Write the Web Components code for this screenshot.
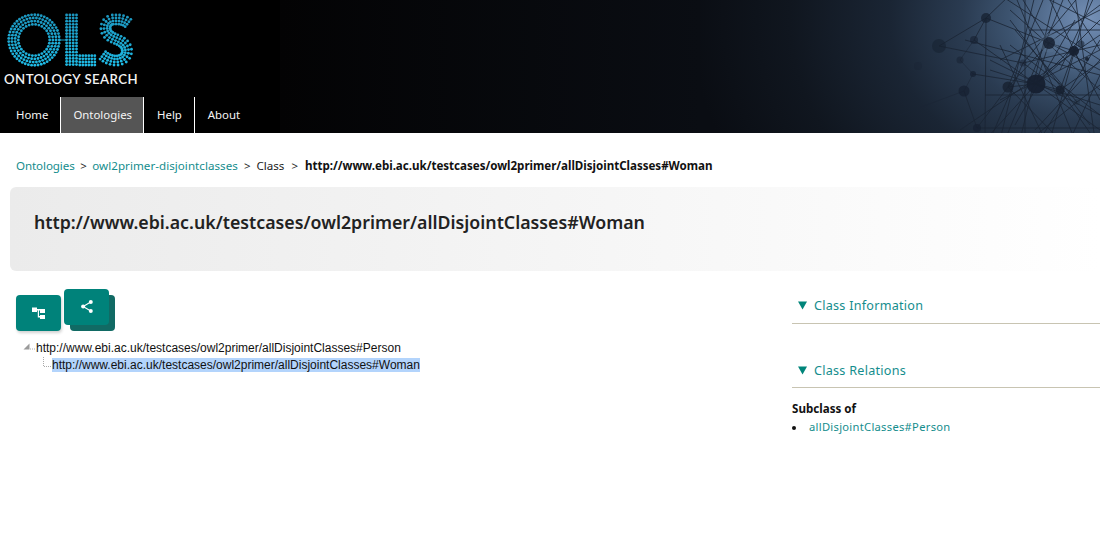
<!DOCTYPE html>
<html lang="en"><head><meta charset="utf-8"><title>OLS</title>
<style>
html,body{margin:0;padding:0;background:#fff}
body{font-family:"Noto Sans",sans-serif;color:#222;width:1100px;height:535px;overflow:hidden}
</style></head><body>
<ols-page>
  <ols-header>
    <ols-logo></ols-logo>
    <ols-nav-item slot="nav" first>Home</ols-nav-item>
    <ols-nav-item slot="nav" active>Ontologies</ols-nav-item>
    <ols-nav-item slot="nav">Help</ols-nav-item>
    <ols-nav-item slot="nav">About</ols-nav-item>
  </ols-header>
  <ols-breadcrumb></ols-breadcrumb>
  <ols-title>http://www.ebi.ac.uk/testcases/owl2primer/allDisjointClasses#Woman</ols-title>
  <ols-main>
    <ols-toolbar slot="left"></ols-toolbar>
    <ols-tree slot="left"></ols-tree>
    <ols-section slot="right" label="Class Information"></ols-section>
    <ols-section slot="right" label="Class Relations" gap>
      <ols-relations></ols-relations>
    </ols-section>
  </ols-main>
</ols-page>
<script>
function def(name, html, init){
  customElements.define(name, class extends HTMLElement{
    constructor(){super();this.attachShadow({mode:'open'}).innerHTML=typeof html==='function'?html(this):html;}
    connectedCallback(){ if(init) init(this,this.shadowRoot); }
  });
}
const FONT='"Noto Sans",sans-serif';
def('ols-page',`<style>:host{display:block}</style><slot></slot>`);

/* network backdrop */
const nodes=[[986,18,5,.75],[939,46,7,.55],[974,40,4,.6],[960,60,3.5,.5],[973,74,3,.7],[964,91,5.5,.7],[977,128,4,.7],[1008,87,5.5,.8],[1036,84,9.5,.95],[1060,90,4.500,.9],[1049,43,6,.85],[1074,51,5,.95],[1081,44,3.5,.55],[1087,59,2,.9],[1023,63,3.5,.45],[1077,102,3,.3],[918,66,4,.25]];
const links=[[986,18,939,46],[986,18,1049,43],[986,18,974,40],[986,18,1010,-5],[974,40,1036,84],[974,40,960,60],[960,60,973,74],[973,74,964,91],[964,91,900,115],[964,91,977,128],[973,74,1036,84],[1008,87,1036,84],[1036,84,1060,90],[1036,84,1049,43],[1036,84,1074,51],[1036,84,1100,20],[1036,84,1100,130],[1036,84,985,140],[1049,43,1074,51],[1049,43,1100,70],[1049,43,1100,5],[1049,43,1020,-5],[1049,43,1008,87],[1074,51,1060,90],[1074,51,1100,100],[1060,90,1100,62],[1060,90,1095,140],[1060,90,1023,63],[1023,63,1080,-5],[1023,63,1100,45],[1023,63,990,140],[1008,87,977,128],[1008,87,1060,140],[1008,87,1045,-5],[977,128,1100,128],[986,18,985,140],[939,46,1023,63],[1077,102,1030,140],[1077,102,1100,85],[1077,102,1015,30],[1100,10,1000,60],[1100,35,960,130],[1090,-5,1050,140],[1065,-5,1100,50],[1100,115,1010,45],[1015,-5,1075,140],[1035,-5,1000,140],[1100,75,965,40],
[1000,-5,1100,60],[1055,-5,1020,140],[1100,25,1040,-5],[1100,90,1010,10],[1075,-5,1095,140],[1100,50,1000,100],[1100,105,990,70],[1040,140,1100,40],[1070,140,1100,75],[1005,140,1065,-5],[1095,-5,1060,70],[1010,20,1090,125],[985,95,1100,95],[1100,60,1035,130],[1030,30,1100,30],[990,60,1100,115],[1025,-5,1025,140],[1000,45,1045,140],[1075,20,1015,125],[1086,75,1050,0]];
const netSvg=`<svg class="net" width="1100" height="133" viewBox="0 0 1100 133" aria-hidden="true">
<defs><radialGradient id="g" gradientUnits="userSpaceOnUse" cx="1090" cy="18" r="400" gradientTransform="translate(1090 18) scale(1 .8) translate(-1090 -18)">
<stop offset="0" stop-color="#7590b6"/><stop offset=".08" stop-color="#5f7a9e"/><stop offset=".2" stop-color="#3d5470"/><stop offset=".32" stop-color="#2a3b51"/><stop offset=".5" stop-color="#1a2534"/><stop offset=".75" stop-color="#10161f"/><stop offset="1" stop-color="#0a0d13"/></radialGradient>
<linearGradient id="f" x1="0" x2="1"><stop offset="0" stop-color="#030304"/><stop offset="1" stop-color="#0a0d13"/></linearGradient></defs>
<rect x="280" width="420" height="133" fill="url(#f)"/>
<rect x="700" width="400" height="133" fill="#0a0d13"/>
<rect x="700" width="400" height="133" fill="url(#g)"/>
${links.map(l=>`<line x1="${l[0]}" y1="${l[1]}" x2="${l[2]}" y2="${l[3]}" stroke="#1a2433" stroke-opacity="${l[0]<975&&l[2]<975?.5:.8}" stroke-width="1"/>`).join('')}
<circle cx="1049" cy="43" r="9.500" fill="#5a7290" fill-opacity=".35"/>
${nodes.map(n=>`<circle cx="${n[0]}" cy="${n[1]}" r="${n[2]}" fill="#162030" fill-opacity="${n[3]}"/>`).join('')}
</svg>`;
def('ols-header',`<style>
:host{display:flex;flex-direction:column;position:relative;height:133px;background:#000;box-sizing:border-box}
.net{position:absolute;left:0;top:0}
.logo,.nav{position:relative}
.logo{height:97px}
.nav{display:flex;height:36px}
</style>${netSvg}<div class="logo"><slot></slot></div><div class="nav"><slot name="nav"></slot></div>`);

/* logo */
def('ols-logo',`<style>
:host{display:block;width:140px;padding-top:12px}
svg{display:block}
.t{display:block;margin:0 0 0 4px;font:600 13.2px/14px Lato,sans-serif;letter-spacing:.45px;color:#f2f2f2;white-space:nowrap}
</style><svg width="140" height="60" viewBox="0 12 140 60" aria-hidden="true">
<defs><linearGradient id="b" gradientUnits="userSpaceOnUse" x1="0" y1="12" x2="0" y2="68"><stop offset="0" stop-color="#1c94bd"/><stop offset="1" stop-color="#1fbde8"/></linearGradient></defs>
<path id="sp" fill="none" d="M128 23C123 19 118 19.5 114 19.5C108 19.5 105.5 24 105.500 28C105.500 35 112 37.5 117 39.5C123 42 127 45.5 127 51C127 58 121 60.5 116 60.5C110 60.5 106 58 101 54"/>
<rect x="60" y="39.5" width="6" height="1" fill="#1a9dc6"/>
<g id="d" fill="url(#b)"></g></svg><span class="t">ONTOLOGY SEARCH</span>`,(el,r)=>{
  const g=r.getElementById('d');let s='';const R=1.42;
  const c=(x,y)=>{s+=`<circle cx="${x.toFixed(2)}" cy="${y.toFixed(2)}" r="${R}"/>`};
  [25.3,22.1,18.9,15.7].forEach(rad=>{const n=Math.round(2*Math.PI*rad/3.25);for(let i=0;i<n;i++){const a=i/n*2*Math.PI;c(34+rad*Math.cos(a),40+rad*Math.sin(a));}});
  for(let x=0;x<4;x++)for(let y=0;y<17;y++)c(66.6+x*3.3,15+y*3.1);
  for(let x=0;x<6;x++)for(let y=0;y<4;y++)c(79.8+x*3.0,55.7+y*3.1);
  const p=r.getElementById('sp'),L=p.getTotalLength();
  [-4.6,-1.55,1.55,4.6].forEach(o=>{for(let l=0;l<=L;l+=3.2){const a=p.getPointAtLength(l),b=p.getPointAtLength(Math.min(L,l+.5)),a0=p.getPointAtLength(Math.max(0,l-.5));
    const dx=b.x-a0.x,dy=b.y-a0.y,m=Math.hypot(dx,dy)||1;c(a.x-dy/m*o,a.y+dx/m*o);}});
  g.innerHTML=s;
});

/* nav */
def('ols-nav-item',`<style>
:host{display:flex;align-items:center;box-sizing:border-box;height:36px;padding:0 12px 0 13px;font:400 11.4px/1 ${FONT};color:#f4f4f4;border-left:1px solid #fff;white-space:nowrap}
:host([first]){border-left:0;padding:0 12px 0 16px}
:host([active]){background:#555;padding:0 11px 0 12px}
</style><slot></slot>`);

/* breadcrumb */
def('ols-breadcrumb',`<style>
:host{display:flex;align-items:center;height:20px;margin-top:23px;padding-left:16px;font:400 11.6px/20px ${FONT};color:#222;white-space:nowrap}
a{color:#148d8d;text-decoration:none;letter-spacing:-.1px}
a+.s+a{letter-spacing:.04px}
.s{margin:0 5.5px;font-size:11.5px}
.s2{margin:0 6px}
.s3{margin:0 7px}
b{font-weight:700;color:#111;letter-spacing:-.03px}
</style><a href="#">Ontologies</a><span class="s">&gt;</span><a href="#">owl2primer-disjointclasses</a><span class="s s2">&gt;</span><span>Class</span><span class="s s3">&gt;</span><b>http://www.ebi.ac.uk/testcases/owl2primer/allDisjointClasses#Woman</b>`);

/* title */
def('ols-title',`<style>
:host{display:flex;align-items:center;box-sizing:border-box;height:84px;margin:11px 0 0 10px;padding:0 0 12px 24px;border-radius:6px;background:linear-gradient(90deg,#ebebeb,#fff);font:600 17.75px/1.2 ${FONT};color:#222;white-space:nowrap}
</style><slot></slot>`);

/* main */
def('ols-main',`<style>
:host{display:grid;grid-template-columns:776px 308px;column-gap:0;padding:24px 0 0 16px}
.l,.r{display:block}
</style><div class="l"><slot name="left"></slot></div><div class="r"><slot name="right"></slot></div>`);

/* toolbar */
const treeIco=`<svg width="13" height="12" viewBox="0 0 13 12" fill="#fff" aria-hidden="true"><rect x="0" y=".5" width="5" height="4.500"/><rect x="8" y="2" width="5" height="4"/><rect x="8" y="8" width="5" height="4"/><path d="M5 2h3v1.500H7V9h1v1.500H5.800V3.500H5z"/></svg>`;
const shareIco=`<svg width="12" height="13" viewBox="0 0 12 13" fill="#fff" aria-hidden="true"><circle cx="9.800" cy="2.100" r="2"/><circle cx="2.100" cy="6.500" r="2"/><circle cx="9.800" cy="10.900" r="2"/><path d="M9.800 2.100 2.100 6.500l7.700 4.400" fill="none" stroke="#fff" stroke-width="1.100"/></svg>`;
def('ols-toolbar',`<style>
:host{display:flex;gap:3px;height:36px}
.b{display:flex;align-items:center;justify-content:center;width:45px;height:36px;border:0;padding:0;border-radius:4px;background:#00827a}
.t{box-shadow:1px 2px 3px rgba(0,0,0,.18)}
.s{margin-top:-6px;box-shadow:6px 6px 0 #116a64}
.s svg{margin-top:-1px}
</style><button class="b t" aria-label="Tree view">${treeIco}</button><button class="b s" aria-label="Share">${shareIco}</button>`);

/* tree */
def('ols-tree',`<style>
:host{display:block;margin-top:9px;font:12px/17px "Liberation Sans",Arial,sans-serif;color:#111;white-space:nowrap}
.r{display:flex;align-items:center;height:17px}
.r svg{flex:none}
.c{display:flex;align-items:center;height:16px;margin-left:25px}
.c svg{flex:none;height:16px}
.sel{background:#b3d4fc;height:14px;line-height:14px;display:block}
</style>
<div class="r"><svg width="20" height="17" viewBox="0 0 20 17" aria-hidden="true"><path d="M7.500 9.500 13.500 3.500V9.500z" fill="#9a9a9a"/><path d="M14 9h5" stroke="#aaa" stroke-dasharray="1 1"/></svg>http://www.ebi.ac.uk/testcases/owl2primer/allDisjointClasses#Person</div>
<div class="c"><svg width="11" height="16" viewBox="0 0 11 16" aria-hidden="true"><path d="M2.500 0V9.500H11" fill="none" stroke="#aaa" stroke-dasharray="1 1"/></svg><span class="sel">http://www.ebi.ac.uk/testcases/owl2primer/allDisjointClasses#Woman</span></div>`);

/* right sections */
def('ols-section',h=>`<style>
:host{display:block;font-family:${FONT}}
:host([gap]){margin-top:36px}
.h{display:flex;align-items:center;gap:7px;box-sizing:border-box;height:29px;padding:0 0 8px 6px;border-bottom:1px solid #c8c4b2;color:#148d8d;font-size:12.6px;letter-spacing:.26px}
:host([gap]) .h{height:28px;padding-bottom:6px}
.h svg{flex:none}
</style><div class="h"><svg width="9" height="9" viewBox="0 0 9 9" aria-hidden="true"><path d="M0 .5h9L4.500 8.500z" fill="#00857a"/></svg><span></span></div><slot></slot>`,(el,r)=>{
  r.querySelector('span').textContent=el.getAttribute('label');
});
def('ols-relations',`<style>
:host{display:block;padding-top:13px;font-family:${FONT}}
.t{font:700 11.6px/16px ${FONT};color:#111}
.li{display:flex;align-items:center;margin-top:2px;font-size:11.2px;line-height:16px;letter-spacing:.28px}
.li i{flex:none;width:4px;height:4px;border-radius:50%;background:#111;margin:1px 13px 0 0}
a{color:#148d8d;text-decoration:none}
</style><div class="t">Subclass of</div><div class="li"><i></i><a href="#">allDisjointClasses#Person</a></div>`);
</script>
</body></html>
